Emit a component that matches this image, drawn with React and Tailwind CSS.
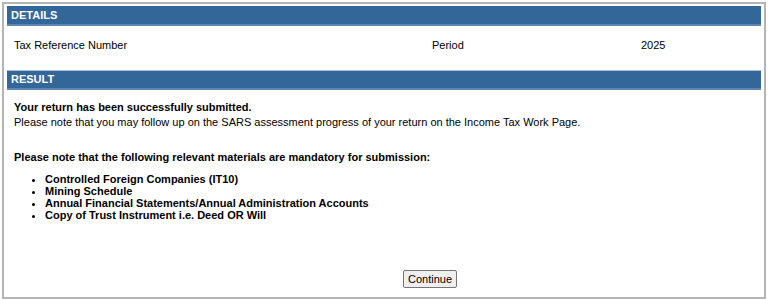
export default function App() {
  const font = { fontFamily: '"Liberation Sans", Arial, sans-serif' };
  return (
    <div className="w-[768px] h-[300px] bg-white p-[2px]" style={font}>
      <div className="w-[764px] h-[297px] border-2 border-[#b4b4b4] px-[3px] pt-[2px] flex flex-col text-[11px] text-black">
        <div className="h-[20px] bg-[#336699] border-b-2 border-[#5d86b3] text-white font-bold text-[11px] pl-[4px] flex items-center">
          DETAILS
        </div>
        <div className="h-[44px] flex items-start pt-[11px]">
          <div className="w-[425px] pl-[7px]">Tax Reference Number</div>
          <div className="w-[202px]">Period</div>
          <div className="pl-[7px]">2025</div>
        </div>
        <div className="h-[20px] bg-[#336699] border-b-2 border-[#5d86b3] border-t border-t-[#a9bcd2] text-white font-bold text-[11px] pl-[4px] flex items-center">
          RESULT
        </div>
        <div className="pl-[7px] pt-[10px] flex-1 flex flex-col">
          <div className="font-bold leading-[15px]">Your return has been successfully submitted.</div>
          <div className="leading-[15px]">
            Please note that you may follow up on the SARS assessment progress of your return on the Income Tax Work Page.
          </div>
          <div className="font-bold leading-[15px] mt-[20px]">
            Please note that the following relevant materials are mandatory for submission:
          </div>
          <ul className="list-disc pl-[31px] mt-[8px] font-bold leading-[12px]">
            <li>Controlled Foreign Companies (IT10)</li>
            <li>Mining Schedule</li>
            <li>Annual Financial Statements/Annual Administration Accounts</li>
            <li>Copy of Trust Instrument i.e. Deed OR Will</li>
          </ul>
          <div className="flex-1" />
          <div className="pl-[389px] pb-[9px]">
            <button className="h-[18px] px-[4px] text-[11px] bg-[#efefef] border border-[#767676] rounded-[2px] leading-none">
              Continue
            </button>
          </div>
        </div>
      </div>
    </div>
  );
}
